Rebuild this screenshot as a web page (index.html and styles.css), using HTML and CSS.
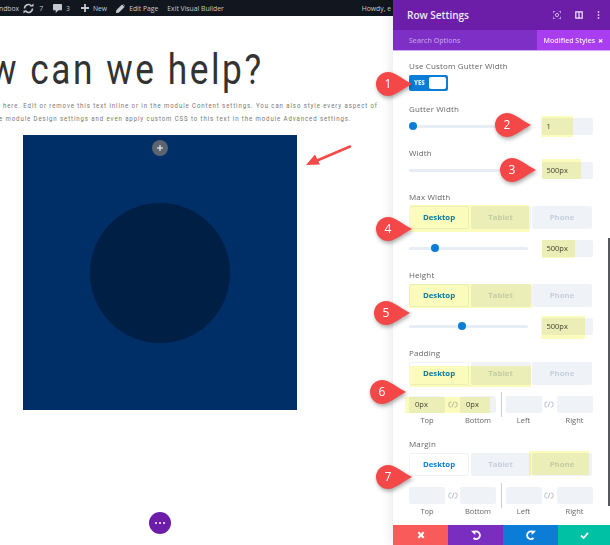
FILE: index.html
```html
<!DOCTYPE html>
<html lang="en">
<head>
<meta charset="utf-8">
<title>Row Settings</title>
<link rel="stylesheet" href="styles.css">
</head>
<body>
<svg class="defs" width="0" height="0" aria-hidden="true">
  <symbol id="pin" viewBox="0 0 38 26"><path d="M13 1C20 1 29 9 37 13 29 17 20 25 13 25A12 12 0 0 1 13 1Z"/></symbol>
  <symbol id="link" viewBox="0 0 12 8"><path d="M4 1H2.500Q1 1 1 4T2.500 7H4M8 1H9.500Q11 1 11 4T9.500 7H8M7 1 5 7" fill="none" stroke="#aab3bd" stroke-width="1"/></symbol>
</svg>
<div class="app">
  <main class="canvas">
    <header class="adminbar">
      <span class="ab-item ab-site">ndbox</span>
      <span class="ab-item ab-sync"><svg width="13" height="11" viewBox="0 0 13 11"><path d="M2.500 5.500a4 4 0 0 1 7-2.600M10.500 5.500a4 4 0 0 1-7 2.600" fill="none" stroke="#c3c9ce" stroke-width="1.500"/><path d="M8 3.500h3.500V0.500zM5 7.500H1.500v3z" fill="#c3c9ce"/></svg>7</span>
      <span class="ab-item ab-comments"><svg width="9" height="9" viewBox="0 0 10 10"><path d="M1 0h8a1 1 0 0 1 1 1v5a1 1 0 0 1-1 1H6L3 10V7H1a1 1 0 0 1-1-1V1a1 1 0 0 1 1-1z" fill="#c3c9ce"/></svg>3</span>
      <span class="ab-item ab-new"><svg width="8" height="8" viewBox="0 0 9 9"><path d="M3.500 0h2v3.500H9v2H5.500V9h-2V5.500H0v-2h3.500z" fill="#c3c9ce"/></svg>New</span>
      <span class="ab-item ab-edit"><svg width="9" height="9" viewBox="0 0 9 9"><path d="M0 9l.8-3L6 .8 8.200 3 3 8.200zM6.800 0 9 2.200" fill="#c3c9ce" stroke="#c3c9ce" stroke-width=".6"/></svg>Edit Page</span>
      <span class="ab-item">Exit Visual Builder</span>
      <span class="ab-item ab-howdy">Howdy, e</span>
    </header>
    <h1 class="headline">w can we help?</h1>
    <p class="lede">
      <span class="lede-line lede-one">here. Edit or remove this text inline or in the module Content settings. You can also style every aspect of</span>
      <span class="lede-line lede-two">e module Design settings and even apply custom CSS to this text in the module Advanced settings.</span>
    </p>
    <section class="row-preview">
      <button class="add-btn" type="button"><svg width="6" height="6" viewBox="0 0 6 6"><path d="M2.500 0h1v2.500H6v1H3.500V6h-1V3.500H0v-1h2.500z" fill="#fff"/></svg></button>
      <div class="disc"></div>
    </section>
    <button class="fab" type="button"><i></i><i></i><i></i></button>
  </main>

  <aside class="panel">
    <div class="panel-head">
      <h2>Row Settings</h2>
      <div class="head-icons">
        <svg width="8" height="8" viewBox="0 0 10 10"><path d="M0 3V0h3M7 0h3v3M10 7v3H7M3 10H0V7" fill="none" stroke="#e9d9f6" stroke-width="1.200"/><rect x="3" y="3" width="4" height="4" rx="2" fill="none" stroke="#e9d9f6"/></svg>
        <svg width="8" height="8" viewBox="0 0 10 10"><path d="M1 1h8v8H1zM5 1v8" fill="none" stroke="#f3eafa" stroke-width="1.500"/></svg>
        <svg width="3" height="8" viewBox="0 0 4 10"><path d="M1 0h2v2H1zM1 4h2v2H1zM1 8h2v2H1z" fill="#f3eafa"/></svg>
      </div>
    </div>
    <div class="panel-tabs">
      <span class="search">Search Options</span>
      <span class="modified">Modified Styles <b>×</b></span>
    </div>
    <div class="panel-body">
      <div class="field">
        <label>Use Custom Gutter Width</label>
        <div class="toggle"><span>YES</span><i></i></div>
      </div>
      <div class="field">
        <label>Gutter Width</label>
        <div class="slider-row"><div class="track"><i class="thumb thumb-gutter"></i></div><div class="input">1</div></div>
      </div>
      <div class="field">
        <label>Width</label>
        <div class="slider-row"><div class="track"></div><div class="input">500px</div></div>
      </div>
      <div class="field">
        <label>Max Width</label>
        <div class="tabs"><span class="tab active">Desktop</span><span class="tab">Tablet</span><span class="tab">Phone</span></div>
        <div class="slider-row"><div class="track"><i class="thumb thumb-max"></i></div><div class="input">500px</div></div>
      </div>
      <div class="field">
        <label>Height</label>
        <div class="tabs"><span class="tab active">Desktop</span><span class="tab">Tablet</span><span class="tab">Phone</span></div>
        <div class="slider-row"><div class="track"><i class="thumb thumb-height"></i></div><div class="input">500px</div></div>
      </div>
      <div class="field">
        <label>Padding</label>
        <div class="tabs"><span class="tab active">Desktop</span><span class="tab">Tablet</span><span class="tab">Phone</span></div>
        <div class="quad">
          <div class="box"><div class="input">0px</div><small>Top</small></div>
          <svg class="link"><use href="#link"/></svg>
          <div class="box"><div class="input">0px</div><small>Bottom</small></div>
          <div class="divider"></div>
          <div class="box"><div class="input"></div><small>Left</small></div>
          <svg class="link"><use href="#link"/></svg>
          <div class="box"><div class="input"></div><small>Right</small></div>
        </div>
      </div>
      <div class="field">
        <label>Margin</label>
        <div class="tabs"><span class="tab active">Desktop</span><span class="tab">Tablet</span><span class="tab">Phone</span></div>
        <div class="quad">
          <div class="box"><div class="input"></div><small>Top</small></div>
          <svg class="link"><use href="#link"/></svg>
          <div class="box"><div class="input"></div><small>Bottom</small></div>
          <div class="divider"></div>
          <div class="box"><div class="input"></div><small>Left</small></div>
          <svg class="link"><use href="#link"/></svg>
          <div class="box"><div class="input"></div><small>Right</small></div>
        </div>
      </div>
    </div>
    <div class="panel-foot">
      <button class="act act-cancel" type="button"><svg width="8" height="8" viewBox="0 0 9 9"><path d="M1.500 1.500l6 6M7.500 1.500l-6 6" stroke="#fff" stroke-width="2.400" fill="none"/></svg></button>
      <button class="act act-undo" type="button"><svg width="10" height="10" viewBox="0 0 10 10"><path d="M2.200 2.800A3.800 3.800 0 1 1 2.500 8" stroke="#fff" stroke-width="1.800" fill="none"/><path d="M0 .8h4.300V5z" fill="#fff"/></svg></button>
      <button class="act act-redo" type="button"><svg width="10" height="10" viewBox="0 0 10 10"><path d="M7.800 2.800A3.800 3.800 0 1 0 7.500 8" stroke="#fff" stroke-width="1.800" fill="none"/><path d="M10 .8H5.700V5z" fill="#fff"/></svg></button>
      <button class="act act-save" type="button"><svg width="9" height="7" viewBox="0 0 10 8"><path d="M1 4l3 2.800L9 1" stroke="#fff" stroke-width="2" fill="none"/></svg></button>
    </div>
  </aside>
</div>

<div class="marks" aria-hidden="true">
  <i class="hl hl-gutter"></i><i class="hl hl-width"></i><i class="hl hl-maxtabs"></i><i class="hl hl-maxval"></i>
  <i class="hl hl-hghttabs"></i><i class="hl hl-hghtval"></i><i class="hl hl-padtabs"></i><i class="hl hl-padvals"></i><i class="hl hl-phone"></i>
  <i class="scrollbar"></i>
  <svg class="arrow" width="50" height="24" viewBox="0 0 50 24"><path d="M45 1.500 11 16" stroke="#f44a4a" stroke-width="2.600" stroke-linecap="round" fill="none"/><path d="M1 20 10 9.500l5 10z" fill="#f44a4a"/></svg>
  <div class="callout c1"><svg><use href="#pin"/></svg><span>1</span></div>
  <div class="callout c2"><svg><use href="#pin"/></svg><span>2</span></div>
  <div class="callout c3"><svg><use href="#pin"/></svg><span>3</span></div>
  <div class="callout c4"><svg><use href="#pin"/></svg><span>4</span></div>
  <div class="callout c5"><svg><use href="#pin"/></svg><span>5</span></div>
  <div class="callout c6"><svg><use href="#pin"/></svg><span>6</span></div>
  <div class="callout c7"><svg><use href="#pin"/></svg><span>7</span></div>
</div>
</body>
</html>
```
FILE: styles.css
```css
* { box-sizing: border-box; }
html, body { margin: 0; padding: 0; }
body { width: 610px; height: 545px; overflow: hidden; position: relative; background: #fff; font-family: "Open Sans", sans-serif; }
.defs { position: absolute; }
.app { display: flex; height: 545px; filter: blur(.3px); }

.canvas { width: 393px; flex: none; display: flex; flex-direction: column; overflow: hidden; position: relative; background: #fff; }
.adminbar { height: 16px; flex: none; background: #12171f; color: #c3c9ce; font-size: 6.800px; display: flex; align-items: center; gap: 9px; white-space: nowrap; }
.ab-item { display: inline-flex; align-items: center; gap: 4px; }
.ab-site { margin-right: -6px; margin-left: -1px; }
.ab-comments { margin-left: 1px; }
.ab-new { margin-left: 2px; }
.ab-howdy { margin-left: auto; margin-right: 2px; }

.headline { margin: 23px 0 0 -10px; font: 400 42px/62px Roboto, sans-serif; letter-spacing: 3px; color: #333; white-space: nowrap; width: max-content; transform: scaleX(.84); transform-origin: left center; }
.lede { margin: -2px 0 0; font: 8px/13px Roboto, sans-serif; letter-spacing: 1.200px; color: #777; }
.lede-line { display: block; white-space: nowrap; width: max-content; transform: scaleX(.757); transform-origin: left center; }
.lede-one { margin-left: 3px; }
.lede-two { margin-left: -1px; }

.row-preview { width: 274px; height: 275px; margin: 10px 0 0 23px; flex: none; background: #002e66; display: flex; flex-direction: column; align-items: center; }
.add-btn { width: 16px; height: 16px; margin-top: 5px; padding: 0; border: 0; border-radius: 50%; background: #5b6470; display: flex; align-items: center; justify-content: center; }
.disc { width: 140px; height: 140px; margin-top: 47px; border-radius: 50%; background: #001f45; }
.fab { width: 22px; height: 22px; margin: 102px 0 0 149px; padding: 0; border: 0; flex: none; border-radius: 50%; background: #6c1ea8; display: flex; align-items: center; justify-content: center; gap: 2px; }
.fab i { width: 2px; height: 2px; background: #fff; border-radius: 50%; }

.panel { flex: 1; display: flex; flex-direction: column; background: #fff; box-shadow: 0 0 12px rgba(0,0,0,.12); position: relative; }
.panel-head { height: 30px; flex: none; background: #6c1ea8; display: flex; align-items: center; justify-content: space-between; padding: 0 11px 0 14px; }
.panel-head h2 { margin: 0; color: #f1e8f8; font-size: 10px; font-weight: 600; }
.head-icons { display: flex; align-items: center; gap: 14px; }
.panel-tabs { height: 21px; flex: none; background: #7d2fc6; border-bottom: 1px solid #d9a6f5; display: flex; justify-content: space-between; align-items: stretch; font-size: 7px; font-weight: 600; }
.search { color: #bf98e3; padding-left: 16px; align-self: center; }
.modified { width: 74px; background: #a93ef0; color: #f6e8ff; display: flex; align-items: center; justify-content: center; gap: 3px; white-space: nowrap; }
.modified b { font-size: 9px; }

.panel-body { flex: 1; padding: 9px 18px 0 16px; display: flex; flex-direction: column; gap: 12px; }
.field label { display: block; height: 12px; margin-bottom: 3px; font-size: 8px; line-height: 12px; color: #666; letter-spacing: .15px; }
.toggle { width: 39px; height: 16px; background: #0c7dd6; border-radius: 2px; padding: 2px; display: flex; align-items: center; justify-content: space-between; }
.toggle span { color: #d6ebfa; font-size: 6px; font-weight: 800; padding-left: 3px; }
.toggle i { width: 17px; height: 12px; background: #fff; border-radius: 2px; }
.slider-row { display: grid; grid-template-columns: 1fr 51px; gap: 14px; align-items: center; height: 17px; }
.track { height: 3px; background: #e6edf5; border-radius: 2px; position: relative; }
.thumb { position: absolute; top: -3px; width: 8px; height: 8px; border-radius: 50%; background: #0c7dd6; }
.thumb-gutter { left: 0; }
.thumb-max { left: 22px; }
.thumb-height { left: 49px; }
.input { height: 17px; background: #eff3f8; border-radius: 2px; font-size: 7.500px; line-height: 17px; color: #444; padding-left: 5px; }
.tabs { display: grid; grid-template-columns: 60px 60px 60px; gap: 1.500px; height: 23px; margin-bottom: 11px; }
.tab { background: #eff3f8; border-radius: 2px; color: #c6d0dc; font-size: 7.800px; font-weight: 700; line-height: 23px; text-align: center; }
.tab.active { background: #fff; color: #0c7dd6; border: 1px solid #eff3f8; line-height: 21px; }
.quad { display: flex; align-items: flex-start; position: relative; }
.box { width: 36px; flex: none; }
.box small { display: block; height: 12px; margin-top: 1px; font-size: 7.500px; line-height: 12px; color: #666; text-align: center; }
.box .input { padding-left: 6px; }
.link { width: 10px; height: 7px; margin: 5px 2.500px 0; flex: none; }
.divider { width: 1px; height: 25px; margin: -4px 4px 0 4.500px; flex: none; background: #ccc; }

.panel-foot { height: 20px; flex: none; display: grid; grid-template-columns: 55px 55px 55px 52px; }
.act { border: 0; padding: 0; display: flex; align-items: center; justify-content: center; }
.act-cancel { background: #f95a5a; }
.act-undo { background: #7a2ec0; }
.act-redo { background: #0c7dd6; }
.act-save { background: #00c1a3; }

.marks { position: absolute; inset: 0; pointer-events: none; }
.hl { position: absolute; background: #fbfbbc; mix-blend-mode: multiply; }
.hl-gutter { left: 541px; top: 116px; width: 32px; height: 21px; }
.hl-width { left: 542px; top: 159px; width: 39px; height: 20px; }
.hl-maxtabs { left: 410px; top: 205px; width: 119px; height: 27px; }
.hl-maxval { left: 542px; top: 240px; width: 33px; height: 18px; }
.hl-hghttabs { left: 409px; top: 284px; width: 123px; height: 24px; }
.hl-hghtval { left: 541px; top: 316px; width: 44px; height: 23px; }
.hl-padtabs { left: 410px; top: 366px; width: 121px; height: 21px; }
.hl-padvals { left: 405px; top: 397px; width: 85px; height: 16px; }
.hl-phone { left: 529px; top: 451px; width: 60px; height: 24px; }
.scrollbar { position: absolute; left: 608px; top: 238px; width: 2px; height: 268px; background: #55595f; }
.arrow { position: absolute; left: 305px; top: 145px; }

.callout { position: absolute; width: 38px; height: 26px; color: #fff; filter: drop-shadow(1px 2px 2px rgba(0,0,0,.35)); }
.callout svg { width: 38px; height: 26px; fill: #f44848; display: block; }
.callout span { position: absolute; left: 0; width: 26px; top: 0; font-size: 12px; line-height: 26px; text-align: center; }
.c1 { left: 375px; top: 71px; }
.c2 { left: 494px; top: 112px; }
.c3 { left: 499px; top: 157px; }
.c4 { left: 375px; top: 216px; }
.c5 { left: 373px; top: 300px; }
.c6 { left: 369px; top: 379px; }
.c7 { left: 375px; top: 464px; }
```
